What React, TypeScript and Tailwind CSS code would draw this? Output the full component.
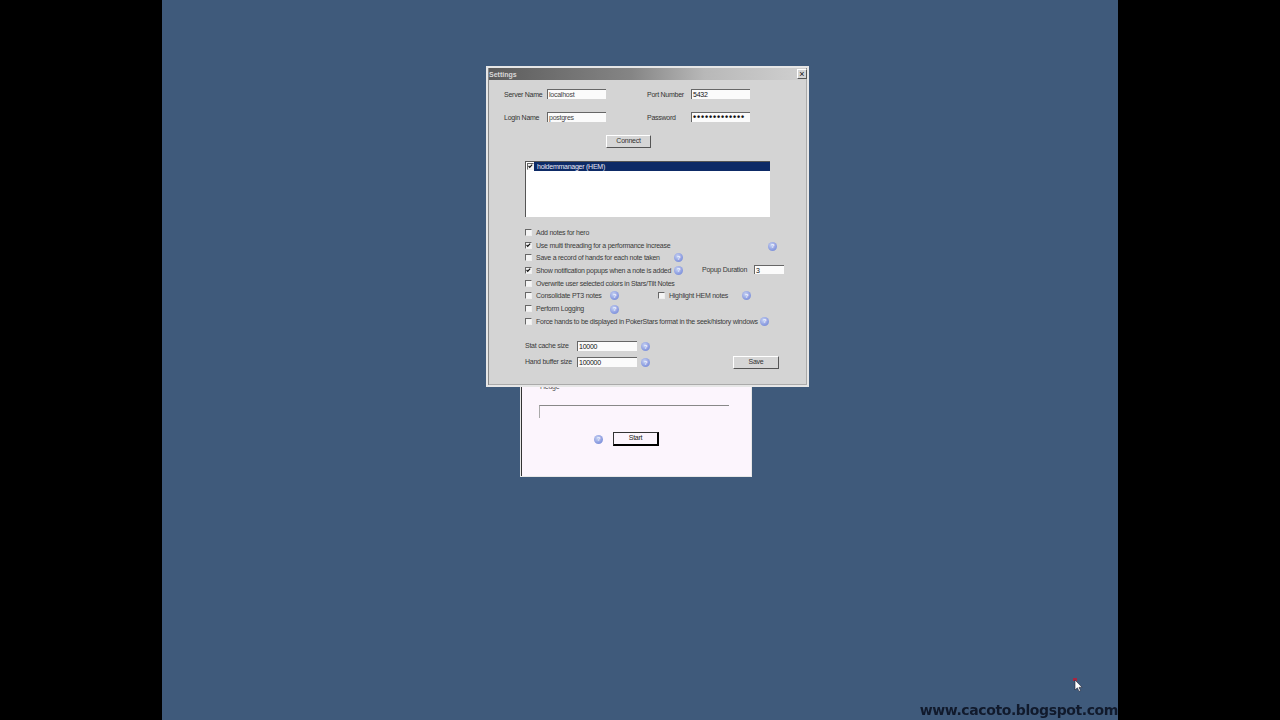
const font = "font-['Liberation_Sans',Arial,sans-serif]";
const txt = "text-[7px] tracking-[-0.25px]";

function Help({ className = "" }: { className?: string }) {
  return (
    <span className={"flex h-[9px] w-[9px] shrink-0 items-center justify-center rounded-full bg-[radial-gradient(circle_at_40%_35%,#c9d2f2,#8a9ce0_60%,#7084d2)] text-[6px] font-bold leading-none text-[#f0f3ff] " + className}>?</span>
  );
}

function Check({ on = false, className = "" }: { on?: boolean; className?: string }) {
  return (
    <span className={"block h-[7px] w-[7px] shrink-0 border border-t-[#666] border-l-[#666] border-r-[#eee] border-b-[#eee] bg-[#f4f4f4] " + className}>
      {on && (
        <svg viewBox="0 0 7 7" className="block h-[5px] w-[5px]">
          <path d="M0.8 2.6 L2.4 4.6 L5.8 0.8" fill="none" stroke="#111" strokeWidth="1.7" />
        </svg>
      )}
    </span>
  );
}

function Field({ value, w, h = "h-[10px]", dark = false, dots = false }: { value: string; w: string; h?: string; dark?: boolean; dots?: boolean }) {
  return (
    <span className={`mb-[2px] block ${w} ${h} shrink-0 overflow-hidden whitespace-nowrap border-t border-l border-t-[#666] border-l-[#666] bg-[#fbfbfb] pl-[1px] leading-[9px] ${dots ? "text-[9px] font-bold tracking-[0.85px]" : txt} ${dark ? "text-[#111]" : "text-[#444]"}`}>
      {value}
    </span>
  );
}

function Btn({ label, w }: { label: string; w: string }) {
  return (
    <span className={`flex ${w} h-[13px] items-center justify-center border-t border-l border-t-white border-l-white border-r border-b border-r-[#555] border-b-[#555] bg-[#d6d6d6] ${txt} text-[#333]`}>
      {label}
    </span>
  );
}

function Row({ on, label, w, children }: { on?: boolean; label: string; w: string; children?: React.ReactNode }) {
  return (
    <div className="flex h-[12.7px] items-center">
      <Check on={on} />
      <span className={`ml-[4px] ${w} shrink-0 whitespace-nowrap ${txt} leading-none text-[#3a3a3a]`}>{label}</span>
      {children}
    </div>
  );
}

export default function App() {
  return (
    <div className={"flex h-[720px] w-[1280px] justify-center overflow-hidden bg-black " + font}>
      <div className="relative h-full w-[956px] bg-[#3f5a7b]">
        <div className="absolute inset-0 blur-[0.5px]">
          {/* back window */}
          <div className="absolute left-[358px] top-[380px] h-[97px] w-[232px] overflow-hidden border border-[#e8e8e8] bg-[#fcf5fd] shadow-[inset_1px_0_0_#333]">
            <div className={`mt-[2px] pl-[19px] ${txt} leading-[8px] text-[#555]`}>Hedge</div>
            <div className="ml-[18px] mt-[14px] h-[13px] w-[190px] border-l border-t border-l-[#aaa] border-t-[#888]" />
            <div className="ml-[73px] mt-[14px] flex items-center">
              <Help />
              <span className={`ml-[10px] flex h-[14px] w-[46px] items-center justify-center border border-[#333] border-b-[2px] border-r-[2px] border-b-black border-r-black bg-[#fcf5fd] ${txt} text-[#222]`}>Start</span>
            </div>
          </div>

          {/* settings dialog */}
          <div className="absolute left-[324px] top-[66px] h-[321px] w-[323px] border-[2px] border-[#e6e6e6] bg-[#d4d4d4] shadow-[inset_1px_1px_0_#888,inset_-1px_-1px_0_#aaa]">
            <div className="mx-[1px] flex h-[12px] items-center justify-between bg-[linear-gradient(90deg,#5c5c5c,#858585_45%,#b8b8b8_68%,#d0d0d0)]">
              <span className="text-[7px] font-bold leading-none text-[#d8d8d8]">Settings</span>
              <span className="-mr-[1px] flex h-[10px] w-[10px] items-center justify-center border border-t-white border-l-white border-r-[#555] border-b-[#555] bg-[#d4d4d4] text-[9px] leading-none text-[#111]">×</span>
            </div>

            <div className={`ml-[16px] mt-[9px] flex h-[12px] items-center ${txt} text-[#333]`}>
              <span className="w-[43px]">Server Name</span>
              <Field value="localhost" w="w-[59px]" />
              <span className="ml-[41px] w-[44px]">Port Number</span>
              <Field value="5432" w="w-[59px]" dark />
            </div>
            <div className={`ml-[16px] mt-[11px] flex h-[12px] items-center ${txt} text-[#333]`}>
              <span className="w-[43px]">Login Name</span>
              <Field value="postgres" w="w-[59px]" />
              <span className="ml-[41px] w-[44px]">Password</span>
              <Field value="•••••••••••••" w="w-[59px]" dark dots />
            </div>
            <div className="ml-[118px] mt-[11px]">
              <Btn label="Connect" w="w-[45px]" />
            </div>

            <div className="ml-[37px] mt-[13px] h-[56px] w-[245px] border-t border-l border-t-[#555] border-l-[#555] bg-white">
              <div className="flex h-[9px] items-center">
                <Check on className="ml-[1px]" />
                <span className={`flex h-full flex-1 items-center bg-[#0d2a66] pl-[3px] ${txt} leading-none text-[#e8e8f4]`}>holdemmanager (HEM)</span>
              </div>
            </div>

            <div className="ml-[37px] mt-[9px]">
              <Row label="Add notes for hero" w="w-[200px]" />
              <Row on label="Use multi threading for a performance increase" w="w-[232px]"><Help className="mt-[2px]" /></Row>
              <Row label="Save a record of hands for each note taken" w="w-[138px]"><Help /></Row>
              <Row on label="Show notification popups when a note is added" w="w-[138px]">
                <Help />
                <span className={`ml-[19px] w-[52px] ${txt} text-[#3a3a3a]`}>Popup Duration</span>
                <Field value="3" w="w-[30px]" h="h-[9px]" dark />
              </Row>
              <Row label="Overwrite user selected colors in Stars/Tilt Notes" w="w-[200px]" />
              <Row label="Consolidate PT3 notes" w="w-[74px]">
                <Help />
                <Check className="ml-[39px]" />
                <span className={`ml-[4px] w-[73px] whitespace-nowrap ${txt} text-[#3a3a3a]`}>Highlight HEM notes</span>
                <Help />
              </Row>
              <Row label="Perform Logging" w="w-[74px]"><Help className="mt-[2px]" /></Row>
              <Row label="Force hands to be displayed in PokerStars format in the seek/history windows" w="w-[224px]"><Help /></Row>
            </div>

            <div className={`ml-[37px] mt-[13px] flex h-[12px] items-center ${txt} text-[#3a3a3a]`}>
              <span className="w-[52px]">Stat cache size</span>
              <Field value="10000" w="w-[60px]" dark />
              <Help className="ml-[4px]" />
            </div>
            <div className={`ml-[37px] mt-[4px] flex h-[12px] items-center ${txt} text-[#3a3a3a]`}>
              <span className="w-[52px]">Hand buffer size</span>
              <Field value="100000" w="w-[60px]" dark />
              <Help className="ml-[4px]" />
              <span className="ml-[83px]"><Btn label="Save" w="w-[46px]" /></span>
            </div>
          </div>

          {/* cursor */}
          <svg viewBox="0 0 10 14" className="absolute left-[911px] top-[678px] h-[14px] w-[10px]">
            <rect x="0" y="0" width="4" height="3" fill="#a8243f" />
            <path d="M2 2 L2 12 L4.4 9.8 L6 13.4 L7.6 12.6 L6 9.4 L9 9.2 Z" fill="#fff" stroke="#223" strokeWidth="0.6" />
          </svg>

          <div className="absolute bottom-[1px] right-0 whitespace-nowrap font-['DejaVu_Sans',sans-serif] text-[14px] font-bold leading-[18px] tracking-[-0.4px] text-[#111a2c]">
            www.cacoto.blogspot.com
          </div>
        </div>
      </div>
    </div>
  );
}
